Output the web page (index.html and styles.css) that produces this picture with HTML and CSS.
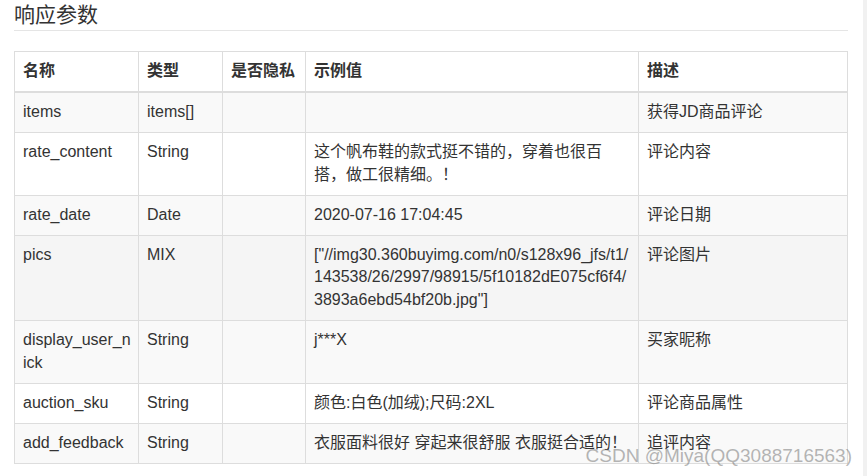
FILE: index.html
```html
<!DOCTYPE html>
<html lang="zh-CN">
<head>
<meta charset="utf-8">
<title>响应参数</title>
<link rel="stylesheet" href="styles.css">
</head>
<body>
<div class="page">
  <main class="main">
    <h2 class="title">响应参数</h2>
    <table class="params">
      <colgroup>
        <col class="c-name"><col class="c-type"><col class="c-private"><col class="c-example"><col class="c-desc">
      </colgroup>
      <thead>
        <tr><th>名称</th><th>类型</th><th>是否隐私</th><th>示例值</th><th>描述</th></tr>
      </thead>
      <tbody>
        <tr class="odd"><td>items</td><td>items[]</td><td></td><td></td><td>获得JD商品评论</td></tr>
        <tr><td>rate_content</td><td>String</td><td></td><td>这个帆布鞋的款式挺不错的，穿着也很百搭，做工很精细。！</td><td>评论内容</td></tr>
        <tr class="odd"><td>rate_date</td><td>Date</td><td></td><td>2020-07-16 17:04:45</td><td>评论日期</td></tr>
        <tr class="hover"><td>pics</td><td>MIX</td><td></td><td>["//img30.360buyimg.com/n0/s128x96_jfs/t1/<br>143538/26/2997/98915/5f10182dE075cf6f4/<br>3893a6ebd54bf20b.jpg"]</td><td>评论图片</td></tr>
        <tr class="odd"><td>display_user_nick</td><td>String</td><td></td><td>j***X</td><td>买家昵称</td></tr>
        <tr><td>auction_sku</td><td>String</td><td></td><td>颜色:白色(加绒);尺码:2XL</td><td>评论商品属性</td></tr>
        <tr class="odd"><td>add_feedback</td><td>String</td><td></td><td>衣服面料很好 穿起来很舒服 衣服挺合适的！</td><td>追评内容</td></tr>
      </tbody>
    </table>
  </main>
  <div class="scroll-track"></div>
</div>
<div class="watermark">CSDN @Miya(QQ3088716563)</div>
</body>
</html>
```

FILE: styles.css
```css
html, body {
  margin: 0;
  padding: 0;
  background: #fff;
}
body {
  font-family: "Liberation Sans", Arial, "Noto Sans CJK SC", sans-serif;
  color: #333;
  height: 476px;
  overflow: hidden;
}
.page {
  display: flex;
  height: 476px;
}
.main {
  flex: 1;
  padding: 0 15px 0 14px;
}
.scroll-track {
  width: 5px;
  background: #f1f1f1;
}
.title {
  margin: 0;
  font-size: 21px;
  font-weight: normal;
  line-height: 30px;
  color: #333;
  border-bottom: 1px solid #e5e5e5;
}
.params {
  margin-top: 20px;
  width: 833px;
  table-layout: fixed;
  border-collapse: collapse;
  border: 1px solid #ddd;
  font-size: 16px;
  line-height: 22.9px;
}
.c-name { width: 124px; }
.c-type { width: 84px; }
.c-private { width: 83px; }
.c-example { width: 333px; }
.c-desc { width: 209px; }
.params th,
.params td {
  border: 1px solid #ddd;
  padding: 8px 6px 8px 8px;
  text-align: left;
  vertical-align: top;
  word-break: break-all;
}
.params th {
  font-weight: bold;
  border-bottom: 2px solid #ddd;
}
.params tr.odd td { background: #f9f9f9; }
.params tr.hover td { background: #f5f5f5; }
.watermark {
  position: absolute;
  right: 15px;
  bottom: 9px;
  font-size: 19px;
  line-height: 22px;
  color: rgba(110, 110, 110, 0.5);
  font-family: "Liberation Sans", Arial, sans-serif;
  white-space: nowrap;
}
```
